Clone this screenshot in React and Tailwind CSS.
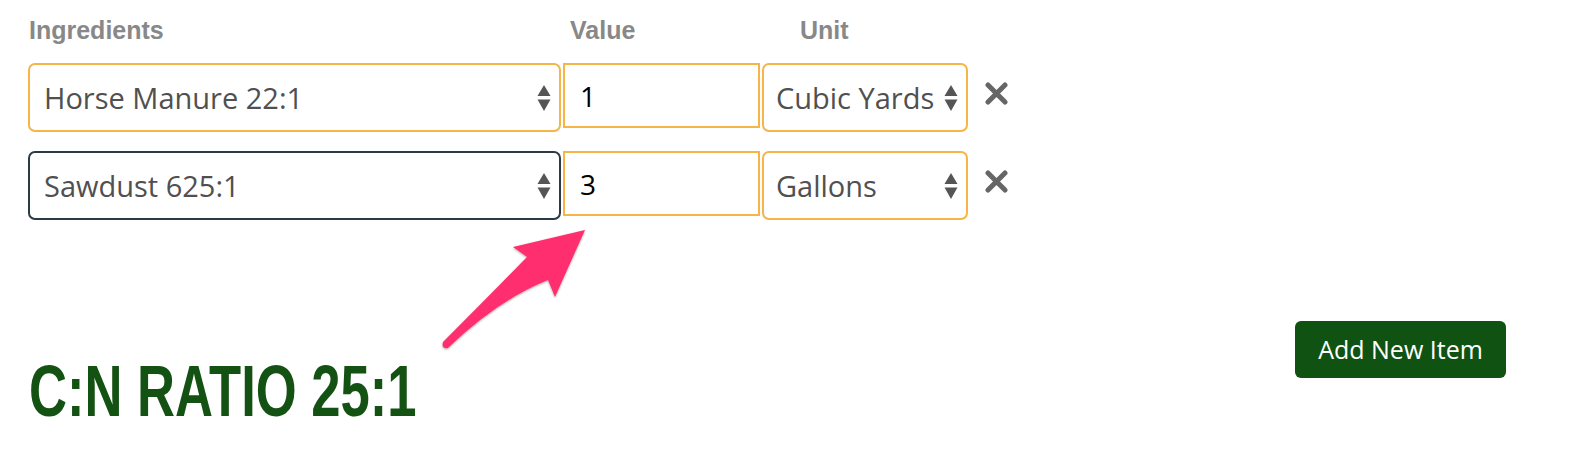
import React, { useState } from 'react';

const orange = 'border-[#f7b447]';

// little up/down carets that sit in the right side of each select
const SelectCaret = () => (
  <svg className="pointer-events-none absolute right-[10px] top-1/2 -translate-y-1/2" width="14" height="28" viewBox="0 0 14 28">
    <path d="M7 1 L13.5 12 L0.5 12 Z" fill="#555" />
    <path d="M0.5 15.5 L13.5 15.5 L7 27 Z" fill="#555" />
  </svg>
);

const Select = ({ value, options, width, border, pad }) => (
  <div className={`relative ${width}`}>
    <select
      defaultValue={value}
      className={`appearance-none w-full h-[69px] rounded-[7px] border-2 ${border} bg-white ${pad} pr-8 text-[29px] text-[#505050] outline-none`}
      style={{ fontFamily: '"Open Sans", sans-serif' }}
    >
      {options.map(o => (
        <option key={o}>{o}</option>
      ))}
    </select>
    <SelectCaret />
  </div>
);

const Times = () => (
  <svg width="23" height="23" viewBox="0 0 23 23" className="mt-[19px] ml-[15px]">
    <path d="M3 3 L20 20 M20 3 L3 20" stroke="#666" strokeWidth="5" strokeLinecap="round" />
  </svg>
);

const ingredientOptions = ['Horse Manure 22:1', 'Sawdust 625:1', 'Grass Clippings 17:1', 'Leaves 60:1'];
const unitOptions = ['Cubic Yards', 'Gallons', 'Pounds'];

const App = () => {
  const [items] = useState([
    { id: 1, ingredient: 'Horse Manure 22:1', value: '1', unit: 'Cubic Yards', focused: false },
    { id: 2, ingredient: 'Sawdust 625:1', value: '3', unit: 'Gallons', focused: true },
  ]);

  return (
    <div className="relative w-[1570px] h-[466px] bg-white overflow-hidden" style={{ fontFamily: '"Open Sans", sans-serif' }}>
      {/* column labels */}
      <div
        className="flex pl-[29px] pt-[15px] text-[25px] font-bold text-[#888] leading-[30px]"
        style={{ fontFamily: '"Liberation Sans", Arial, sans-serif' }}
      >
        <div className="w-[541px]">Ingredients</div>
        <div className="w-[230px]">Value</div>
        <div>Unit</div>
      </div>

      {/* ingredient rows */}
      <div className="flex flex-col gap-[19px] pl-[28px] mt-[18px]">
        {items.map(item => (
          <div key={item.id} className="flex items-start gap-[2px]">
            <Select
              value={item.ingredient}
              options={ingredientOptions}
              width="w-[533px]"
              pad="pl-[14px]"
              border={item.focused ? 'border-[#2c3a44]' : orange}
            />
            <input
              defaultValue={item.value}
              className={`w-[197px] h-[65px] border-2 ${orange} pl-[15px] text-[28px] text-black outline-none`}
              style={{ fontFamily: '"Open Sans", sans-serif' }}
            />
            <Select value={item.unit} options={unitOptions} width="w-[206px]" pad="pl-[12px]" border={orange} />
            <Times />
          </div>
        ))}
      </div>

      {/* ratio + add button */}
      <div className="flex justify-between items-start pl-[29px] pr-[64px]">
        <div
          className="mt-[135px] text-[72px] leading-none font-bold text-[#145214] scale-x-[0.73] origin-left whitespace-nowrap"
          style={{ fontFamily: '"Liberation Sans", Arial, sans-serif' }}
        >
          C:N RATIO 25:1
        </div>
        <button className="mt-[101px] w-[211px] h-[57px] rounded-[6px] bg-[#0f5212] text-white text-[25px]">
          Add New Item
        </button>
      </div>

      {/* annotation arrow */}
      <svg className="absolute left-0 top-0 pointer-events-none" width="1570" height="466">
        <defs>
          <filter id="sh" x="-20%" y="-20%" width="140%" height="140%">
            <feDropShadow dx="0" dy="1" stdDeviation="1" floodColor="#000" floodOpacity="0.35" />
          </filter>
        </defs>
        <path
          d="M585 230 L513 247 L527 257 Q488 297 443 342 Q441 349 448 348 Q498 300 548 280 L555 297 Z"
          fill="#ff2e6e"
          filter="url(#sh)"
        />
      </svg>
    </div>
  );
};

export default App;
